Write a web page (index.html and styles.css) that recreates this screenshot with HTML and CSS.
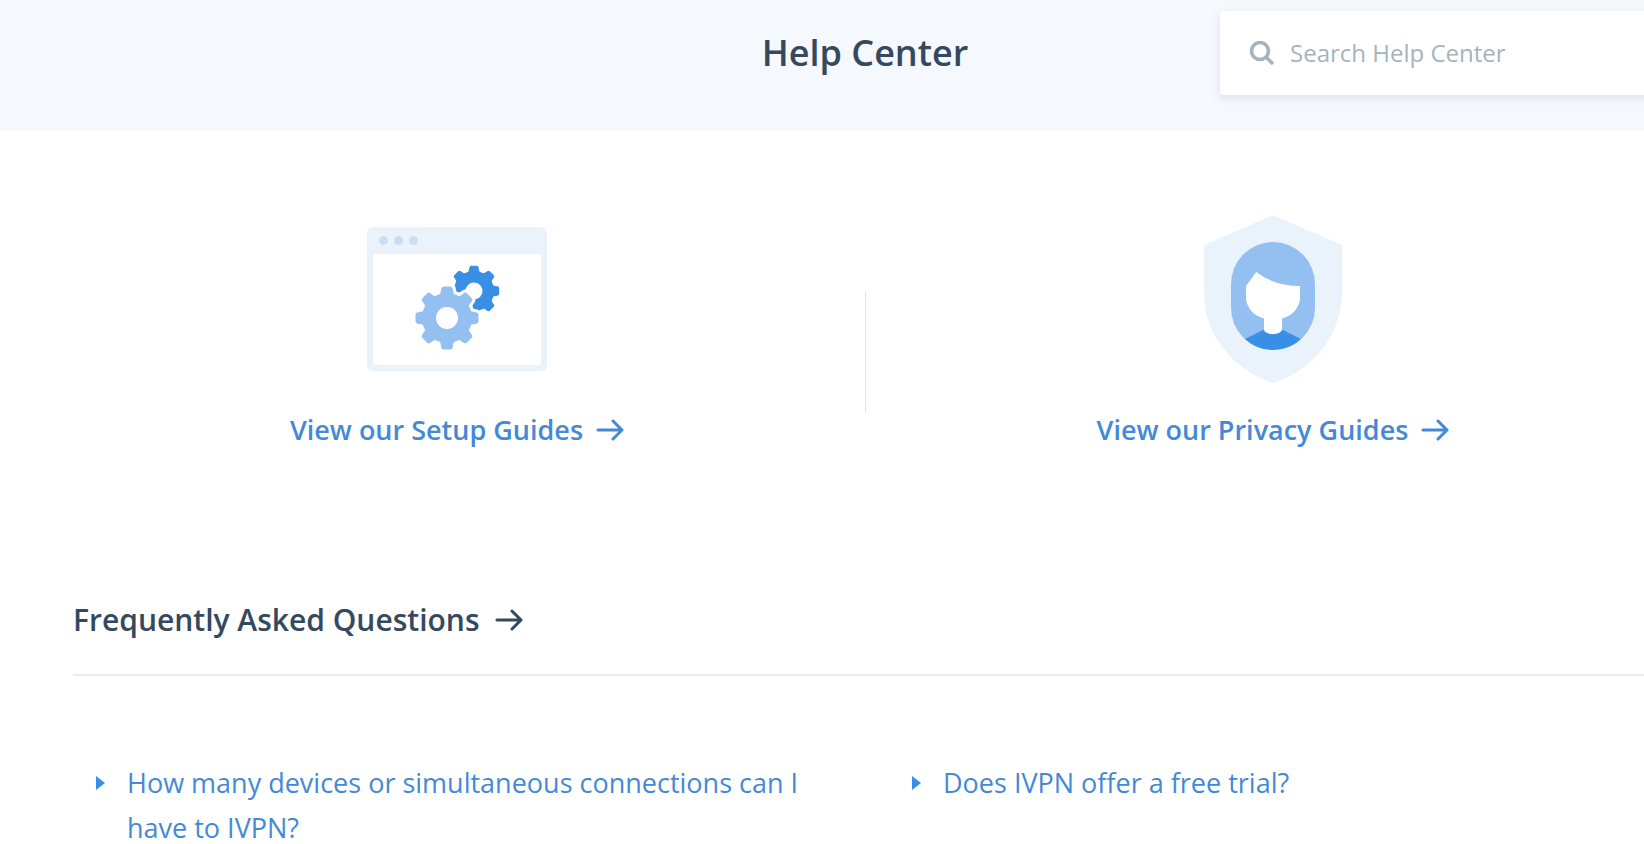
FILE: index.html
```
<!DOCTYPE html>
<html lang="en">
<head>
  <meta charset="UTF-8" />
  <meta name="viewport" content="width=device-width, initial-scale=1.0"/>
  <title>Help Center</title>
  <link rel="stylesheet" href="styles.css">
</head>
<body>
  <header class="page-header">
    <div class="container header-row">
      <h1>Help Center</h1>
      <form class="search">
        <svg class="search-icon" viewBox="0 0 24 24" aria-hidden="true"><circle cx="10" cy="10" r="8.5"/><path d="M16 16l7 7"/></svg>
        <input type="search" placeholder="Search Help Center" aria-label="Search Help Center" />
      </form>
    </div>
  </header>

  <main class="container">
    <section class="guides">
      <a class="guide" href="#setup">
        <span class="guide-art">
          <svg width="180" height="144" viewBox="0 0 180 144" aria-hidden="true">
            <defs>
              <path id="tooth" d="M-9-22C-6-25-6.500-25-5.800-29Q-5.400-31.500-3.500-31.500H3.500Q5.400-31.500 5.800-29C6.500-25 6-25 9-22Z"/>
              <g id="gear">
                <circle r="25"/>
                <use href="#tooth"/>
                <use href="#tooth" transform="rotate(45)"/>
                <use href="#tooth" transform="rotate(90)"/>
                <use href="#tooth" transform="rotate(135)"/>
                <use href="#tooth" transform="rotate(180)"/>
                <use href="#tooth" transform="rotate(225)"/>
                <use href="#tooth" transform="rotate(270)"/>
                <use href="#tooth" transform="rotate(315)"/>
              </g>
            </defs>
            <rect class="pale" width="180" height="144" rx="6"/>
            <rect class="white" x="6" y="27" width="168" height="111" rx="2"/>
            <g class="dots"><circle cx="16.500" cy="13.500" r="4.500"/><circle cx="31.500" cy="13.500" r="4.500"/><circle cx="46.500" cy="13.500" r="4.500"/></g>
            <use class="strong" href="#gear" transform="translate(107 64) scale(.8)"/>
            <circle class="white" cx="107" cy="64" r="8.500"/>
            <use class="knockout" href="#gear" transform="translate(80 91)"/>
            <use class="soft" href="#gear" transform="translate(80 91)"/>
            <circle class="white" cx="80" cy="91" r="11"/>
          </svg>
        </span>
        <span class="guide-link">View our Setup Guides
          <svg class="arrow" viewBox="0 0 28 22" aria-hidden="true"><path d="M2 11H26M17 2l9 9-9 9"/></svg>
        </span>
      </a>
      <div class="divider"></div>
      <a class="guide" href="#privacy">
        <span class="guide-art">
          <svg width="138" height="168" viewBox="0 0 138 168" aria-hidden="true">
            <path class="pale" d="M69 0L138 30V78C138 120 108 156 69 168C30 156 0 120 0 78V30Z"/>
            <rect class="soft" x="27" y="27" width="84" height="108" rx="42"/>
            <path class="strong" d="M41 124L60 114.500H78L97 124Q85 135 69 135T41 124Z"/>
            <path class="white" d="M52.300 57Q70 71 96 71V85C94 94 88 101 78 103.500V115C76 120.500 62 120.500 60 115V103.500C50 101 44 94 42 85V71Z"/>
          </svg>
        </span>
        <span class="guide-link">View our Privacy Guides
          <svg class="arrow" viewBox="0 0 28 22" aria-hidden="true"><path d="M2 11H26M17 2l9 9-9 9"/></svg>
        </span>
      </a>
    </section>

    <section class="faq">
      <h2>
        <a href="#faq">Frequently Asked Questions
          <svg class="arrow" viewBox="0 0 28 22" aria-hidden="true"><path d="M2 11H26M17 2l9 9-9 9"/></svg>
        </a>
      </h2>
      <ul class="questions">
        <li><a href="#devices">How many devices or simultaneous connections can I have to IVPN?</a></li>
        <li><a href="#trial">Does IVPN offer a free trial?</a></li>
      </ul>
    </section>
  </main>
</body>
</html>
```
FILE: styles.css
```
:root {
  --navy: #34495e;
  --link: #4489d6;
  --blue: #398fe6;
  --blue-soft: #93c0f0;
  --blue-pale: #eaf3fc;
  --band: #f5f8fd;
  --muted: #a5b3bf;
  --line: #ebecee;
}

* { box-sizing: border-box; margin: 0; padding: 0; }

body {
  background: #fff;
  color: var(--navy);
  font-family: 'Open Sans', sans-serif;
  overflow-x: hidden;
}

a {
  color: inherit;
  text-decoration: none;
}

/* the content column bleeds slightly past the right edge */
.container {
  margin-left: 73px;
  margin-right: -13px;
}

.page-header {
  background: var(--band);
  padding: 11px 0 36px;
}

.header-row {
  display: grid;
  grid-template-columns: 1fr auto 1fr;
  align-items: center;
}

h1 {
  grid-column: 2;
  font-size: 36px;
  font-weight: 600;
  line-height: 48px;
}

.search {
  justify-self: end;
  display: flex;
  align-items: center;
  gap: 16px;
  width: 437px;
  height: 84px;
  padding: 0 30px;
  background: #fff;
  border-radius: 4px;
  box-shadow: 0 3px 8px rgba(52,73,94,0.13);
}

.search-icon {
  width: 24px;
  height: 24px;
  fill: none;
  stroke: var(--muted);
  stroke-width: 3.5;
}

.search input {
  flex: 1;
  min-width: 0;
  padding-bottom: 2px;
  border: none;
  outline: none;
  background: none;
  color: var(--navy);
  font: 24px 'Open Sans', sans-serif;
}
.search input::placeholder { color: var(--muted); }

.guides {
  display: grid;
  grid-template-columns: 1fr 48px 1fr;
  align-items: center;
  padding-top: 84px;
}

.guide {
  display: flex;
  flex-direction: column;
  align-items: center;
  gap: 24px;
  color: var(--link);
}

.guide-art {
  display: flex;
  align-items: center;
  height: 168px;
}

.guide-link {
  display: flex;
  align-items: center;
  gap: 13px;
  font-size: 27px;
  font-weight: 600;
  line-height: 45px;
}

.divider {
  justify-self: center;
  width: 1px;
  height: 120px;
  margin-top: 36px;
  background: #dfe3e8;
}

.arrow {
  width: 28px;
  height: 22px;
  fill: none;
  stroke: currentColor;
  stroke-width: 3;
  stroke-linecap: round;
  stroke-linejoin: round;
}

/* illustration fills */
.pale { fill: var(--blue-pale); }
.soft { fill: var(--blue-soft); }
.strong { fill: var(--blue); }
.white { fill: #fff; }
.dots { fill: #c8def6; }
.knockout {
  fill: #fff;
  stroke: #fff;
  stroke-width: 6;
}

.faq { padding-top: 144px; }

.faq h2 {
  padding-bottom: 30px;
  border-bottom: 2px solid var(--line);
  font-size: 30px;
  font-weight: 600;
  line-height: 48px;
}
.faq h2 a {
  display: inline-flex;
  align-items: center;
  gap: 15px;
}

.questions {
  display: grid;
  grid-template-columns: 1fr 1fr;
  gap: 48px;
  padding-top: 84px;
  list-style: none;
}

.questions li {
  display: flex;
  padding: 0 23px;
  color: var(--link);
  font-size: 27px;
  line-height: 45px;
}
.questions li::before {
  content: '';
  flex: none;
  width: 9px;
  height: 14px;
  margin: 16px 22px 0 0;
  background: var(--blue);
  clip-path: polygon(0 0, 100% 50%, 0 100%);
}
```
